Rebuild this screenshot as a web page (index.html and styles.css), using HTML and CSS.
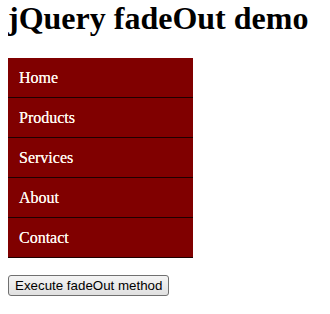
FILE: index.html
```html
<!DOCTYPE html>
<html lang="en">

<head>
    <meta charset="UTF-8">
    <title>jQuery fadeOut demo</title>
    <link rel="stylesheet" href="styles.css">
</head>

<body>
    <h1>jQuery fadeOut demo</h1>

    <ul class="menu" id="menu">
        <li class="menu-item">Home</li>
        <li class="menu-item">Products</li>
        <li class="menu-item">Services</li>
        <li class="menu-item">About</li>
        <li class="menu-item">Contact</li>
    </ul>

    <button class="btn" type="button">Execute fadeOut method</button>
</body>

</html>
```

FILE: styles.css
```css
body {
    margin: 0 8px;
    font-family: "Liberation Serif", "Times New Roman", serif;
    background-color: white;
}

h1 {
    margin: 0 0 21px 0;
    font-size: 32px;
    line-height: 37px;
}

.menu {
    list-style: none;
    margin: 0;
    padding: 0;
    width: 185px;
    background-color: #800000;
}

.menu-item {
    height: 39px;
    line-height: 39px;
    padding-left: 11px;
    color: #fff8f0;
    font-size: 16px;
    border-bottom: 1px solid #1e0000;
    text-shadow: 0 0 0.4px #fff8f0;
}

.btn {
    margin-top: 17px;
    font-family: "Liberation Sans", Arial, sans-serif;
    font-size: 13.33px;
    height: 21px;
    padding: 0 6px;
    color: black;
    background: linear-gradient(#f4f4f4, #e0e0e0);
    border: 1px solid #707070;
    border-radius: 3px;
}
```
